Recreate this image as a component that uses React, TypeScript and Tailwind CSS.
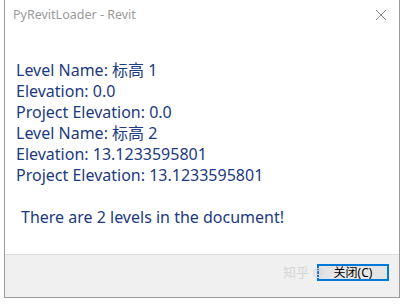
import React from "react";

export default function App() {
  const lines = [
    "Level Name: 标高 1",
    "Elevation: 0.0",
    "Project Elevation: 0.0",
    "Level Name: 标高 2",
    "Elevation: 13.1233595801",
    "Project Elevation: 13.1233595801",
  ];
  return (
    <div
      className="w-[404px] h-[304px] bg-white overflow-hidden"
      style={{ fontFamily: '"Noto Sans", "Noto Sans CJK SC", sans-serif' }}
    >
      <div className="ml-[4px] w-[396px] h-[298px] border-l border-r border-b border-[#9a9a9a] flex flex-col bg-white">
        <div className="h-[30px] flex items-center justify-between pl-[8px] pr-[10px]">
          <span className="text-[12.5px] text-[#9a9a9a] leading-none">PyRevitLoader - Revit</span>
          <svg width="12" height="12" viewBox="0 0 12 12" className="mr-[2px]">
            <path d="M1 1 L11 11 M11 1 L1 11" stroke="#8a8a8a" strokeWidth="1" fill="none" />
          </svg>
        </div>
        <div className="flex-1 pl-[11px] pt-[30px] text-[#1c3a80] text-[16px]">
          {lines.map((l, i) => (
            <div key={i} className="h-[21px] leading-[21px] whitespace-nowrap">
              {l}
            </div>
          ))}
          <div className="mt-[21px] pl-[5px] h-[21px] leading-[21px] whitespace-nowrap">
            There are 2 levels in the document!
          </div>
        </div>
        <div className="h-[43px] bg-[#f0f0f0] border-t border-[#dfdfdf] flex items-start justify-end pr-[10px] pt-[9px] relative">
          <span className="absolute left-[278px] top-[11px] text-[13px] text-[#d6d6d6] whitespace-nowrap leading-none pointer-events-none">
            知乎 @
          </span>
          <button className="w-[72px] h-[17px] border-2 border-[#0078d7] bg-[#e5e5e5] text-[12px] text-black leading-none flex items-center justify-center">
            关闭(C)
          </button>
        </div>
      </div>
    </div>
  );
}
